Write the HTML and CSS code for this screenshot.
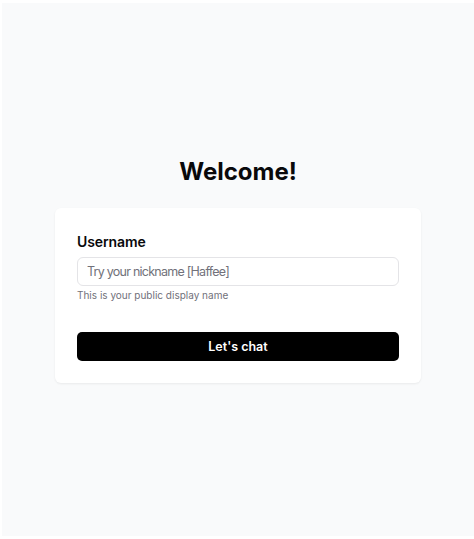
FILE: index.html
```html
<!DOCTYPE html>
<html>
<head>
<meta charset="utf-8">
<link rel="stylesheet" href="styles.css">
</head>
<body>
<main class="page">
  <h1 class="title">Welcome!</h1>
  <form class="card">
    <label class="label" for="nick">Username</label>
    <input class="input" id="nick" type="text" placeholder="Try your nickname [Haffee]">
    <p class="help">This is your public display name</p>
    <button class="button" type="button">Let's chat</button>
  </form>
</main>
</body>
</html>
```
FILE: styles.css
```css
html, body {
  margin: 0;
  padding: 0;
  background: #ffffff;
}
body {
  padding: 3px 0 3px 2px;
  font-family: Inter, "Noto Sans", sans-serif;
  color: #09090b;
}
.page {
  background: #f9fafb;
  min-height: 533px;
  box-sizing: border-box;
  display: flex;
  flex-direction: column;
  align-items: center;
  justify-content: center;
}
.title {
  margin: 0 0 20px;
  font-size: 24px;
  line-height: 32px;
  font-weight: 700;
}
.card {
  width: 366px;
  box-sizing: border-box;
  background: #ffffff;
  border-radius: 6px;
  box-shadow: 0 1px 3px rgba(0,0,0,0.04), 0 1px 2px rgba(0,0,0,0.03);
  padding: 24px 22px 22px;
  display: flex;
  flex-direction: column;
}
.label {
  font-size: 14px;
  line-height: 20px;
  font-weight: 600;
  letter-spacing: -0.1px;
  margin-bottom: 5px;
}
.input {
  height: 29px;
  box-sizing: border-box;
  border: 1px solid #e4e4e7;
  border-radius: 6px;
  padding: 0 9px;
  font-family: inherit;
  font-size: 12.5px;
  letter-spacing: -0.75px;
  color: #09090b;
  outline: none;
}
.input::placeholder {
  color: #71717a;
}
.help {
  margin: 2px 0 0;
  font-size: 10px;
  line-height: 14px;
  color: #71717a;
}
.button {
  margin-top: 30px;
  height: 29px;
  border: none;
  border-radius: 5px;
  background: #000000;
  color: #ffffff;
  font-family: inherit;
  font-size: 12.5px;
  font-weight: 600;
}
```
